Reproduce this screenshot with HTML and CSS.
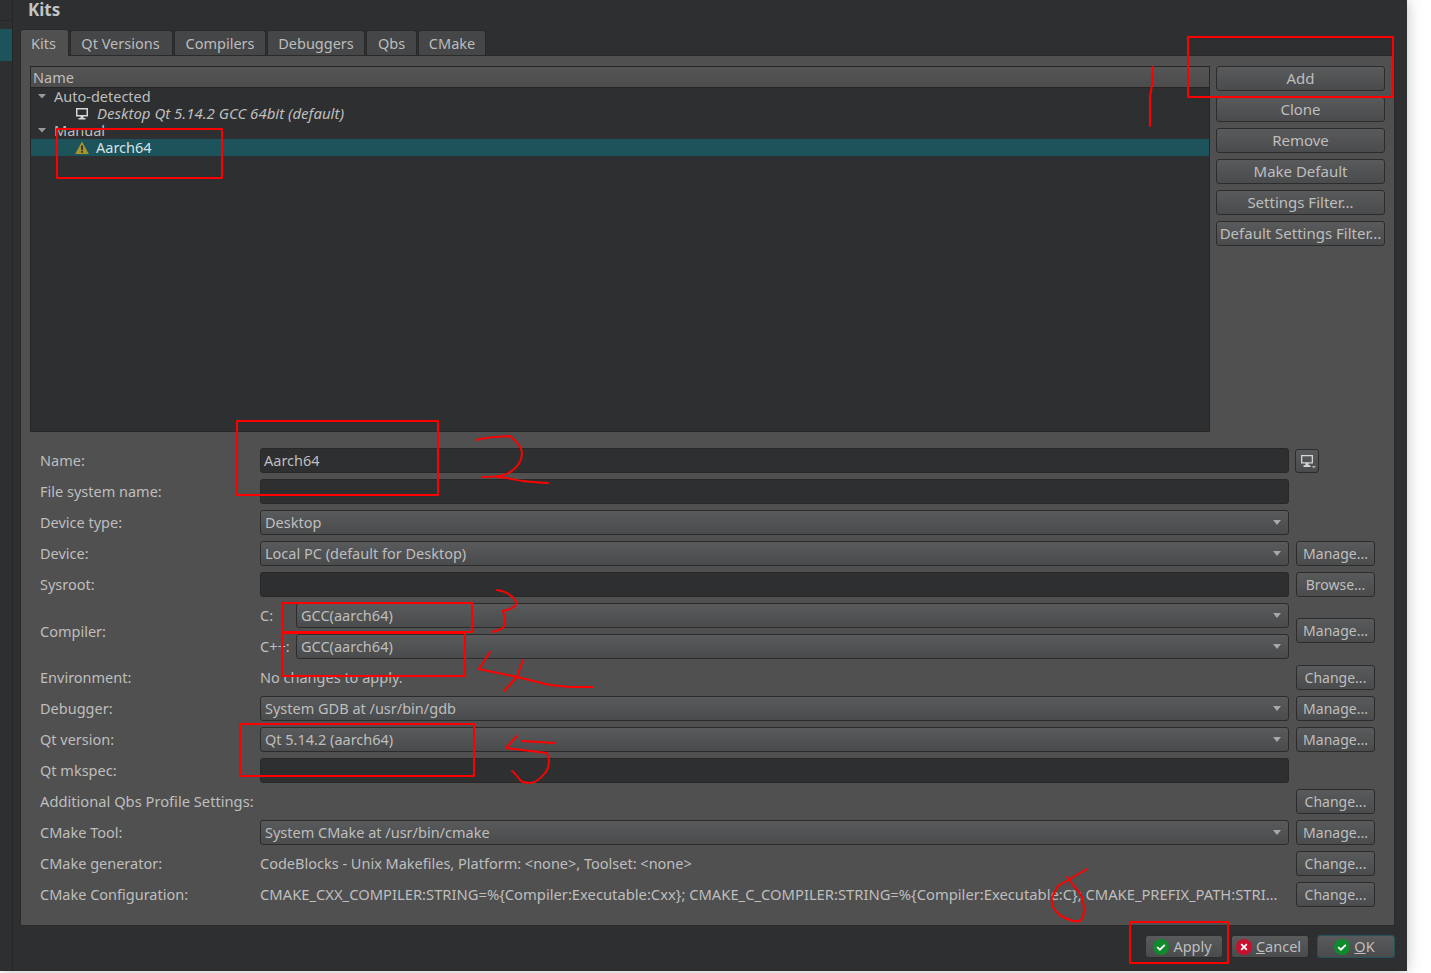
FILE: index.html
```html
<!DOCTYPE html>
<html lang="en">
<head>
<meta charset="utf-8">
<title>Kits</title>
<link rel="stylesheet" href="styles.css">
</head>
<body>
<div class="window">
  <aside class="rail"><div class="rail-top"></div><div class="rail-sel"></div></aside>
  <main class="main">
    <h1 class="title">Kits</h1>
    <div class="tabs">
      <div class="tab active t1">Kits</div>
      <div class="tab t2">Qt Versions</div>
      <div class="tab t3">Compilers</div>
      <div class="tab t4">Debuggers</div>
      <div class="tab t5">Qbs</div>
      <div class="tab t6">CMake</div>
    </div>
    <section class="pane">
      <div class="top">
        <div class="tree">
          <div class="tree-head">Name</div>
          <div class="row"><svg class="arrow" viewBox="0 0 8 5"><path d="M0 0h8L4 4.5z"/></svg>Auto-detected</div>
          <div class="row kit italic"><svg class="ico" viewBox="0 0 14 14"><path class="mon" d="M1 1h12v8.5H1zM2.5 2.5v5.5h9V2.5zM5.5 9.5h3v1.5h2v1.5h-7V11h2z"/></svg>Desktop Qt 5.14.2 GCC 64bit (default)</div>
          <div class="row"><svg class="arrow" viewBox="0 0 8 5"><path d="M0 0h8L4 4.5z"/></svg>Manual</div>
          <div class="row kit sel"><svg class="ico" viewBox="0 0 14 14"><path class="warn" d="M7 .5L13.8 13H.2z"/><path class="warn-mark" d="M6.1 4.5h1.8v4.7H6.1zM6.1 10h1.8v1.8H6.1z"/></svg>Aarch64</div>
        </div>
        <div class="side">
          <button class="btn">Add</button>
          <button class="btn">Clone</button>
          <button class="btn">Remove</button>
          <button class="btn">Make Default</button>
          <button class="btn">Settings Filter...</button>
          <button class="btn">Default Settings Filter...</button>
        </div>
      </div>
      <div class="form">
        <div class="lab">Name:</div><div class="field input">Aarch64</div>
        <div class="devbtn"><svg viewBox="0 0 18 16"><path class="mon" d="M3 2h12v8.5H3zM4.3 3.3v5.9h9.4V3.3zM7.5 10.5h3v1.8h2V14h-7v-1.7h2z"/><path class="mon2" d="M13.5 13h4.5l-2.2 2.6z"/></svg></div>

        <div class="lab">File system name:</div><div class="field input"></div><div></div>

        <div class="lab">Device type:</div><div class="field combo">Desktop<i class="caret"></i></div><div></div>

        <div class="lab">Device:</div><div class="field combo">Local PC (default for Desktop)<i class="caret"></i></div><button class="mini">Manage...</button>

        <div class="lab">Sysroot:</div><div class="field input"></div><button class="mini">Browse...</button>

        <div class="lab span2">Compiler:</div>
        <div class="lang"><span class="lang-l">C:</span><div class="field combo grow">GCC(aarch64)<i class="caret"></i></div></div>
        <button class="mini span2 center">Manage...</button>
        <div class="lang"><span class="lang-l">C++:</span><div class="field combo grow">GCC(aarch64)<i class="caret"></i></div></div>

        <div class="lab">Environment:</div><div class="value">No changes to apply.</div><button class="mini">Change...</button>

        <div class="lab">Debugger:</div><div class="field combo">System GDB at /usr/bin/gdb<i class="caret"></i></div><button class="mini">Manage...</button>

        <div class="lab">Qt version:</div><div class="field combo">Qt 5.14.2 (aarch64)<i class="caret"></i></div><button class="mini">Manage...</button>

        <div class="lab">Qt mkspec:</div><div class="field input"></div><div></div>

        <div class="lab wide">Additional Qbs Profile Settings:</div><div class="value"></div><button class="mini">Change...</button>

        <div class="lab">CMake Tool:</div><div class="field combo">System CMake at /usr/bin/cmake<i class="caret"></i></div><button class="mini">Manage...</button>

        <div class="lab">CMake generator:</div><div class="value">CodeBlocks - Unix Makefiles, Platform: &lt;none&gt;, Toolset: &lt;none&gt;</div><button class="mini">Change...</button>

        <div class="lab">CMake Configuration:</div><div class="value config">CMAKE_CXX_COMPILER:STRING=%{Compiler:Executable:Cxx}; CMAKE_C_COMPILER:STRING=%{Compiler:Executable:C}; CMAKE_PREFIX_PATH:STRI…</div><button class="mini">Change...</button>
      </div>
    </section>
    <footer class="foot">
      <button class="dlg"><svg class="badge" viewBox="0 0 16 16"><circle class="ok" cx="8" cy="8" r="8"/><path class="mark" d="M4.2 8.2l2.7 2.5 4.9-4.9"/></svg>Apply</button>
      <button class="dlg"><svg class="badge" viewBox="0 0 16 16"><circle class="no" cx="8" cy="8" r="8"/><path class="mark" d="M5.2 5.2l5.6 5.6M10.8 5.2l-5.6 5.6"/></svg><span><u>C</u>ancel</span></button>
      <button class="dlg default"><svg class="badge" viewBox="0 0 16 16"><circle class="ok" cx="8" cy="8" r="8"/><path class="mark" d="M4.2 8.2l2.7 2.5 4.9-4.9"/></svg><span><u>O</u>K</span></button>
    </footer>
  </main>
</div>
<svg class="marks" viewBox="0 0 1431 973" aria-hidden="true">
  <path d="M1188 37H1393V97H1188z"/>
  <path d="M1153 67L1152 85L1150 97L1150 126"/>
  <path d="M57 129H222V178H57z"/>
  <path d="M237 421H438V495H237z"/>
  <path d="M477 440C485 437 497 437 510 436C516 441 522 447 522 453C522 460 518 466 513 470C507 475 500 477 482 477M497 477C506 477 514 480 523 481C532 482 540 483 548 483"/>
  <path d="M283 603H472V632H283z"/>
  <path d="M282 633H465V676H282z"/>
  <path d="M497 590C505 591 512 594 517 603C516 607 508 610 503 611C504 616 506 620 505 625C503 629 497 631 492 632"/>
  <path d="M490 652L479 669L517 677L550 685L570 687L593 687M523 660L517 677L504 691"/>
  <path d="M240 724H474V776H240z"/>
  <path d="M522 741L555 743M517 736L506 748L547 753L549 760C549 766 548 770 545 773C541 778 536 783 530 783C525 783 522 782 520 780C517 776 515 773 512 771"/>
  <path d="M1130 922H1228V963H1130z"/>
  <path d="M1087 869L1058 886L1052 897C1051 901 1052 904 1053 907C1056 912 1059 915 1063 917C1069 920 1076 922 1080 921C1083 918 1084 914 1084 910C1084 905 1083 901 1082 897C1079 892 1076 888 1073 885L1067 877"/>
</svg>
</body>
</html>
```
FILE: styles.css
```css
* { box-sizing: border-box; }
html, body { margin: 0; height: 973px; overflow: hidden; }
body { background: #fff; font: 14.5px/17px "Noto Sans", "Open Sans", sans-serif; color: #bebebe; position: relative; }
.window { width: 1407px; height: 971px; background: #2e2f30; display: flex; box-shadow: 0 0 14px rgba(0,0,0,.25); }
.rail { width: 13px; border-right: 1px solid #262626; display: flex; flex-direction: column; }
.rail-top { height: 21px; border-bottom: 1px solid #262626; margin-bottom: 8px; }
.rail-sel { height: 32px; background: #1d545c; }
.main { flex: 1; padding-left: 7px; padding-right: 12px; display: flex; flex-direction: column; }
.title { margin: 0 0 0 8px; height: 29px; font-size: 17px; line-height: 20px; font-weight: 700; color: #c4c4c4; }
.tabs { display: flex; align-items: flex-end; height: 27px; gap: 1px; position: relative; z-index: 1; margin-bottom: -1px; }
.tab { height: 25px; background: #454647; border: 1px solid #2a2a2a; border-bottom: 0; border-radius: 3px 3px 0 0; text-align: center; line-height: 25px; color: #bcbcbc; margin-bottom: 1px; }
.tab.active { height: 27px; background: #505050; border-color: #2a2a2a; margin-bottom: 0; line-height: 27px; }
.t1 { width: 49px; padding-right: 2px; } .t2 { width: 103px; padding-right: 2px; } .t3 { width: 92px; } .t4 { width: 98px; } .t5 { width: 51px; } .t6 { width: 68px; }
.pane { height: 871px; background: #505050; border: 1px solid #2a2a2a; border-radius: 0 2px 2px 2px; padding: 10px 9px 0; display: flex; flex-direction: column; }
.top { display: flex; gap: 6px; height: 366px; }
.tree { width: 1180px; background: #2e2f30; border: 1px solid #262626; }
.tree-head { height: 21px; background: linear-gradient(#555, #4c4c4c); border-bottom: 1px solid #262626; padding-left: 2px; line-height: 21px; }
.row { height: 17px; line-height: 17px; display: flex; align-items: center; padding-left: 23px; position: relative; }
.kit { padding-left: 44px; }
.italic { font-style: italic; font-size: 15px; padding-left: 66px; }
.arrow { position: absolute; left: 7px; top: 6px; width: 8px; height: 5px; }
.arrow path { fill: #9a9a9a; }
.ico { width: 14px; height: 14px; flex: none; margin-right: 7px; }
.italic .ico { margin-left: -22px; margin-right: 8px; }
.mon { fill: #d6d6d6; fill-rule: evenodd; }
.mon2 { fill: #a8a8a8; }
.warn { fill: #a5952b; }
.warn-mark { fill: #2e2f30; }
.sel { background: #1d545c; color: #d8e2e4; }
.side { width: 169px; display: flex; flex-direction: column; gap: 6px; }
button { font: inherit; color: #bebebe; cursor: default; }
.btn, .mini, .dlg { background: linear-gradient(#595a5b, #4a4b4c); border: 1px solid #2c2c2c; border-radius: 3px; padding: 0; white-space: nowrap; }
.btn { height: 25px; font-size: 15px; }
.form { display: grid; grid-template-columns: 214px 1029px 80px; grid-auto-rows: 25px; row-gap: 6px; column-gap: 6px; margin-top: 16px; padding-left: 10px; align-items: center; }
.lab { white-space: nowrap; }
.wide { font-size: 14.7px; }
.field { height: 25px; border-radius: 3px; line-height: 23px; white-space: nowrap; }
.input { background: #2e2f30; border: 1px solid #282828; padding-left: 3px; }
.combo { background: linear-gradient(#595a5b, #4a4b4c); border: 1px solid #2c2c2c; padding-left: 4px; position: relative; }
.caret { position: absolute; right: 7px; top: 9px; border: 4px solid transparent; border-top: 5px solid #a8a8a8; border-bottom: 0; }
.value { white-space: nowrap; }
.config { font-size: 14.75px; }
.mini { height: 25px; width: 79px; justify-self: end; font-size: 14px; }
.span2 { grid-row: span 2; }
.center { align-self: center; margin-bottom: 2px; }
.lang { display: flex; align-items: center; }
.lang-l { width: 36px; }
.grow { flex: 1; }
.devbtn { width: 24px; height: 24px; background: linear-gradient(#595a5b, #4a4b4c); border: 1px solid #2c2c2c; border-radius: 3px; display: flex; align-items: center; justify-content: center; }
.devbtn svg { width: 18px; height: 16px; }
.foot { flex: 1; display: flex; justify-content: flex-end; align-items: flex-start; gap: 8px; padding-top: 9px; }
.dlg { width: 78px; height: 23px; display: flex; align-items: center; justify-content: center; gap: 4px; line-height: 21px; padding-right: 3px; }
.dlg.default { border-color: #24535b; }
.badge { width: 16px; height: 16px; flex: none; }
.ok { fill: #0f8a2c; }
.no { fill: #c8102e; }
.mark { fill: none; stroke: #fff; stroke-width: 1.8; }
.marks { position: absolute; left: 0; top: 0; width: 1431px; height: 973px; pointer-events: none; }
.marks path { fill: none; stroke: #f00; stroke-width: 2; stroke-linejoin: round; stroke-linecap: round; }
```
